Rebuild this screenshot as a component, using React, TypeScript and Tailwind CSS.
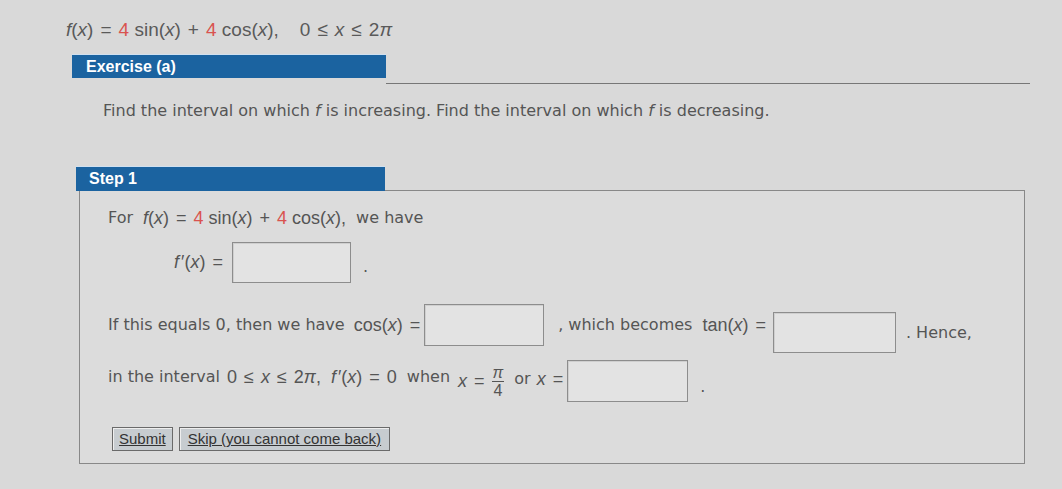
import React from "react";

const MF = { fontFamily: '"Liberation Sans", Arial, sans-serif' };
const R = ({ children }: { children: React.ReactNode }) => (
  <span className="text-[#d9534f]">{children}</span>
);
const X = () => <span className="italic">x</span>;
const Op = ({ c }: { c: string }) => <span className="mx-[7px]">{c}</span>;
const FP = () => (
  <>
    <span className="italic">f</span>
    <span className="ml-[2px]">′</span>
  </>
);

const Box = ({ w, h }: { w: string; h: string }) => (
  <span className={`block ${w} ${h} border border-[#8d8d8d] bg-[#e3e3e3] shadow-[inset_1px_1px_0_#cfcfcf]`} />
);

export default function App() {
  return (
    <div className="w-[1062px] h-[489px] overflow-hidden bg-[#d9d9d9] text-[#555]" style={{ fontFamily: '"DejaVu Sans", Verdana, sans-serif' }}>
      {/* top formula */}
      <div className="pt-[17px] pl-[66px] h-[44px] text-[19px] text-[#5a5a5a] flex items-center whitespace-nowrap" style={MF}>
        <span>
          <span className="italic">f</span>(<X />)<Op c="=" /><R>4</R> sin(<X />)<Op c="+" /><R>4</R> cos(<X />),
        </span>
        <span className="ml-[21px]">
          0<Op c="≤" /><X /><Op c="≤" />2<span className="italic">π</span>
        </span>
      </div>

      {/* Exercise bar */}
      <div className="mt-[10px] ml-[72px] mr-[32px] flex items-end">
        <div className="w-[314px] h-[24px] bg-[#1b63a0] border-t border-[#d0e0f0] flex items-center pl-[14px] text-white font-bold text-[16px]" style={MF}>
          Exercise (a)
        </div>
        <div className="flex-1 border-b border-[#777] mb-[-6px]" />
      </div>

      <div className="mt-[21px] ml-[103px] text-[16px] leading-[24px] whitespace-nowrap">
        Find the interval on which <span className="italic">f</span> is increasing. Find the interval on which <span className="italic">f</span> is decreasing.
      </div>

      {/* Step 1 */}
      <div className="mt-[43px] ml-[76px] mr-[37px]">
        <div className="flex items-end">
          <div className="w-[309px] h-[25px] bg-[#1b63a0] border-t border-[#d0e0f0] flex items-center pl-[13px] text-white font-bold text-[16px]" style={MF}>
            Step 1
          </div>
          <div className="flex-1 border-b border-[#888]" />
        </div>
        <div className="ml-[3px] border-l border-r border-b border-[#888] bg-[#dcdcdc] h-[273px] pl-[28px] pt-[15px] text-[16px] whitespace-nowrap">
          <div className="flex items-center h-[24px]">
            <span>For</span>
            <span className="ml-[10px] text-[18px]" style={MF}>
              <span className="italic">f</span>(<X />)<Op c="=" /><R>4</R> sin(<X />)<Op c="+" /><R>4</R> cos(<X />),
            </span>
            <span className="ml-[10px]">we have</span>
          </div>
          <div className="flex items-center mt-[12px] ml-[66px] h-[41px]">
            <span className="text-[18px]" style={MF}>
              <FP />(<X />)<Op c="=" />
            </span>
            <span className="ml-[2px]"><Box w="w-[119px]" h="h-[41px]" /></span>
            <span className="ml-[12px] mt-[8px]">.</span>
          </div>
          <div className="flex items-center mt-[21px] h-[42px]">
            <span>If this equals 0, then we have</span>
            <span className="ml-[9px] text-[18px]" style={MF}>
              cos(<X />)<Op c="=" />
            </span>
            <span className="ml-[-3px]"><Box w="w-[120px]" h="h-[42px]" /></span>
            <span className="ml-[14px]">, which becomes</span>
            <span className="ml-[10px] text-[18px]" style={MF}>
              tan(<X />)<Op c="=" />
            </span>
            <span className="mt-[14px]"><Box w="w-[123px]" h="h-[41px]" /></span>
            <span className="ml-[10px] mt-[16px]">. Hence,</span>
          </div>
          <div className="flex items-center mt-[14px] h-[42px]">
            <span className="mb-[8px]">in the interval</span>
            <span className="ml-[7px] text-[18px] mb-[8px]" style={MF}>
              0<Op c="≤" /><X /><Op c="≤" />2<span className="italic">π</span>,
            </span>
            <span className="ml-[10px] text-[18px] mb-[8px]" style={MF}>
              <FP />(<X />)<Op c="=" />0
            </span>
            <span className="ml-[10px] mb-[8px]">when</span>
            <span className="ml-[8px] text-[18px] flex items-center" style={MF}>
              <X /><Op c="=" />
              <span className="inline-flex flex-col items-center leading-[17px] text-[16px]">
                <span className="italic border-b border-[#555] px-[1px]">π</span>
                <span>4</span>
              </span>
            </span>
            <span className="ml-[10px] mb-[4px]">or</span>
            <span className="ml-[6px] text-[18px] mb-[4px]" style={MF}>
              <X /><Op c="=" />
            </span>
            <span className="ml-[-3px]"><Box w="w-[121px]" h="h-[42px]" /></span>
            <span className="ml-[12px] mt-[12px]">.</span>
          </div>
          <div className="flex items-center mt-[25px] ml-[4px] gap-[6px] text-[15px] text-[#333]" style={MF}>
            <button className="h-[24px] px-[6px] border border-[#6a6a6a] bg-[#c7ccd0] underline shadow-[inset_1px_1px_0_#eee]">Submit</button>
            <button className="h-[24px] px-[8px] border border-[#6a6a6a] bg-[#c7ccd0] underline shadow-[inset_1px_1px_0_#eee]">Skip (you cannot come back)</button>
          </div>
        </div>
      </div>
    </div>
  );
}
